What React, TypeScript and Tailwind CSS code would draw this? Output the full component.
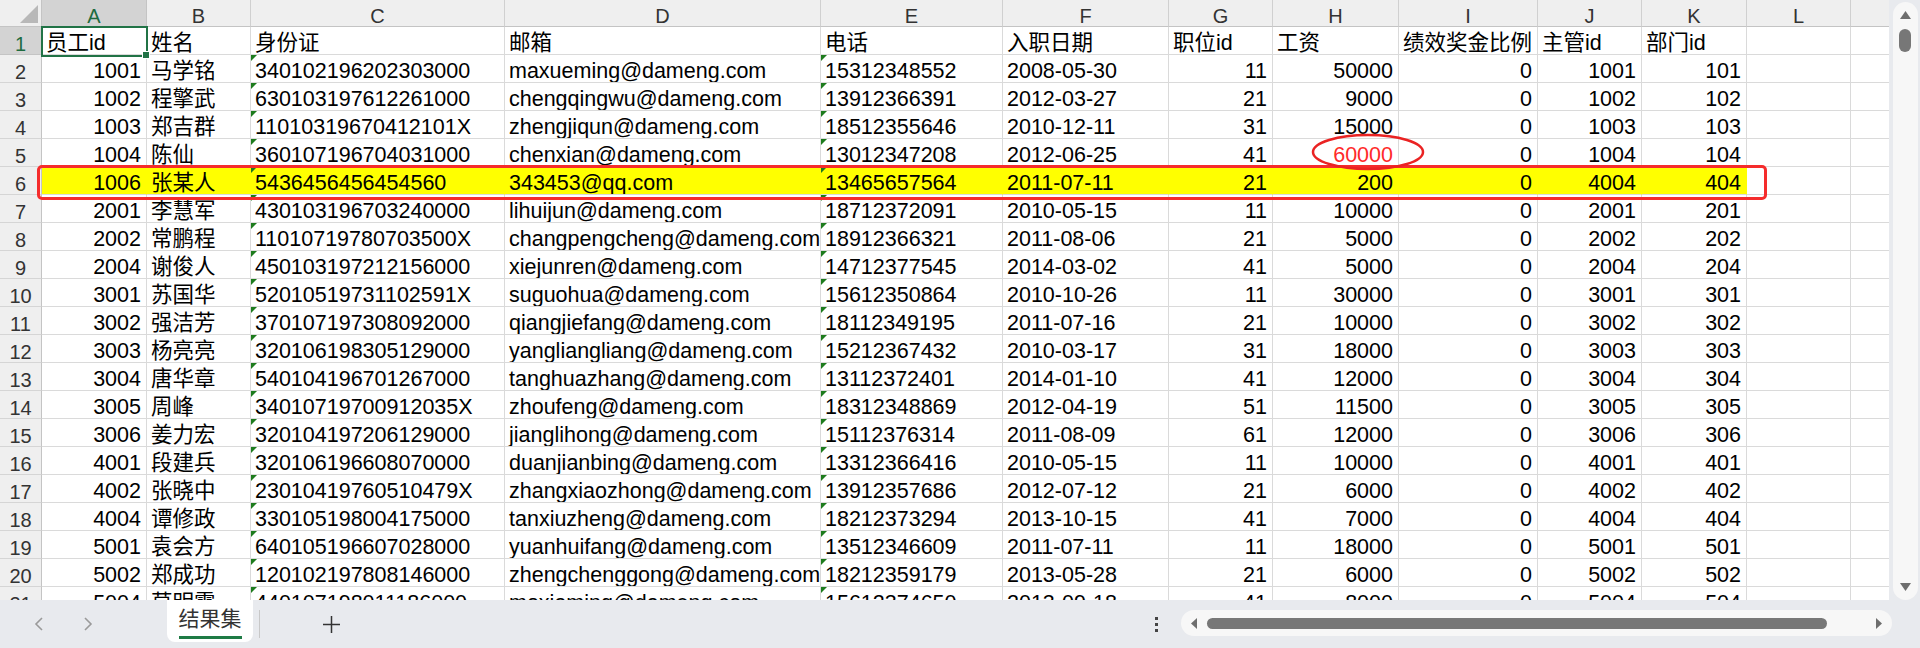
import React from "react";

const colW = [
  "w-[105px]",
  "w-[104px]",
  "w-[254px]",
  "w-[316px]",
  "w-[182px]",
  "w-[166px]",
  "w-[104px]",
  "w-[126px]",
  "w-[139px]",
  "w-[104px]",
  "w-[105px]",
  "w-[104px]",
  "w-[104px]",
];
const letters = ["A", "B", "C", "D", "E", "F", "G", "H", "I", "J", "K", "L", "M"];
const rightAlign = [true, false, false, false, false, false, true, true, true, true, true, false, false];

const header = ["员工id", "姓名", "身份证", "邮箱", "电话", "入职日期", "职位id", "工资", "绩效奖金比例", "主管id", "部门id", "", ""];

const data: string[][] = [
  ["1001", "马学铭", "340102196202303000", "maxueming@dameng.com", "15312348552", "2008-05-30", "11", "50000", "0", "1001", "101"],
  ["1002", "程擎武", "630103197612261000", "chengqingwu@dameng.com", "13912366391", "2012-03-27", "21", "9000", "0", "1002", "102"],
  ["1003", "郑吉群", "11010319670412101X", "zhengjiqun@dameng.com", "18512355646", "2010-12-11", "31", "15000", "0", "1003", "103"],
  ["1004", "陈仙", "360107196704031000", "chenxian@dameng.com", "13012347208", "2012-06-25", "41", "60000", "0", "1004", "104"],
  ["1006", "张某人", "5436456456454560", "343453@qq.com", "13465657564", "2011-07-11", "21", "200", "0", "4004", "404"],
  ["2001", "李慧军", "430103196703240000", "lihuijun@dameng.com", "18712372091", "2010-05-15", "11", "10000", "0", "2001", "201"],
  ["2002", "常鹏程", "11010719780703500X", "changpengcheng@dameng.com", "18912366321", "2011-08-06", "21", "5000", "0", "2002", "202"],
  ["2004", "谢俊人", "450103197212156000", "xiejunren@dameng.com", "14712377545", "2014-03-02", "41", "5000", "0", "2004", "204"],
  ["3001", "苏国华", "52010519731102591X", "suguohua@dameng.com", "15612350864", "2010-10-26", "11", "30000", "0", "3001", "301"],
  ["3002", "强洁芳", "370107197308092000", "qiangjiefang@dameng.com", "18112349195", "2011-07-16", "21", "10000", "0", "3002", "302"],
  ["3003", "杨亮亮", "320106198305129000", "yangliangliang@dameng.com", "15212367432", "2010-03-17", "31", "18000", "0", "3003", "303"],
  ["3004", "唐华章", "540104196701267000", "tanghuazhang@dameng.com", "13112372401", "2014-01-10", "41", "12000", "0", "3004", "304"],
  ["3005", "周峰", "34010719700912035X", "zhoufeng@dameng.com", "18312348869", "2012-04-19", "51", "11500", "0", "3005", "305"],
  ["3006", "姜力宏", "320104197206129000", "jianglihong@dameng.com", "15112376314", "2011-08-09", "61", "12000", "0", "3006", "306"],
  ["4001", "段建兵", "320106196608070000", "duanjianbing@dameng.com", "13312366416", "2010-05-15", "11", "10000", "0", "4001", "401"],
  ["4002", "张晓中", "23010419760510479X", "zhangxiaozhong@dameng.com", "13912357686", "2012-07-12", "21", "6000", "0", "4002", "402"],
  ["4004", "谭修政", "330105198004175000", "tanxiuzheng@dameng.com", "18212373294", "2013-10-15", "41", "7000", "0", "4004", "404"],
  ["5001", "袁会方", "640105196607028000", "yuanhuifang@dameng.com", "13512346609", "2011-07-11", "11", "18000", "0", "5001", "501"],
  ["5002", "郑成功", "120102197808146000", "zhengchenggong@dameng.com", "18212359179", "2013-05-28", "21", "6000", "0", "5002", "502"],
  ["5004", "莫明霞", "440107198011186000", "moxiaming@dameng.com", "15612374650", "2013-09-18", "41", "8000", "0", "5004", "504"],
];

function Cell({
  ci,
  text,
  yellow,
  red,
  tri,
  right,
}: {
  ci: number;
  text: string;
  yellow?: boolean;
  red?: boolean;
  tri?: boolean;
  right: boolean;
}) {
  return (
    <div
      className={`relative h-full shrink-0 ${colW[ci]} border-b border-r ${
        yellow ? "bg-[#ffff00] border-r-[#ffff00] border-b-[#dadada]" : "border-[#dadada]"
      } flex items-end overflow-hidden whitespace-nowrap ${right ? "justify-end pr-[5px]" : "pl-[4px]"}`}
    >
      {tri && (
        <div className="absolute top-0 left-0 w-0 h-0 border-t-[6px] border-t-[#1d7b1d] border-r-[6px] border-r-transparent" />
      )}
      <span className={`leading-none text-[21.5px] ${red ? "text-[#ff2a2a]" : "text-black"}`}>{text}</span>
    </div>
  );
}

export default function App() {
  return (
    <div className="w-[1920px] h-[648px] flex flex-col bg-[#e8eaee] overflow-hidden font-[family-name:'Liberation_Sans','Noto_Sans_CJK_SC',sans-serif]">
      <div className="flex h-[600px] shrink-0">
        <div className="relative w-[1889px] h-[600px] overflow-hidden bg-white">
          {/* column header */}
          <div className="flex h-[27px]">
            <div className="relative w-[42px] shrink-0 h-full bg-[#efefef] border-r border-b border-[#c4c4c4]">
              <svg className="absolute left-0 top-0" width="42" height="27">
                <polygon points="38,5 38,23 20,23" fill="#b8b8b8" />
              </svg>
            </div>
            {letters.map((l, i) => (
              <div
                key={l}
                className={`shrink-0 ${colW[i]} h-full border-r border-b flex items-end justify-center ${
                  i === 0
                    ? "bg-[#d3d3d3] border-r-[#c4c4c4] border-b-[#217346] text-[#1e6b3f]"
                    : "bg-[#efefef] border-r-[#d0d0d0] border-b-[#c4c4c4] text-[#333333]"
                }`}
              >
                <span className="leading-none text-[20px]">{l}</span>
              </div>
            ))}
          </div>
          {/* row 1 */}
          <div className="flex h-[28px]">
            <div className="w-[42px] shrink-0 h-full bg-[#d3d3d3] border-r border-r-[#217346] border-b border-b-[#c4c4c4] flex items-end justify-center text-[#1e6b3f]">
              <span className="leading-none text-[20px]">1</span>
            </div>
            {header.map((h, i) => (
              <Cell key={i} ci={i} text={h} right={false} />
            ))}
          </div>
          {data.map((row, ri) => {
            const yellow = ri === 4;
            return (
              <div key={ri} className="flex h-[28px]">
                <div className="w-[42px] shrink-0 h-full bg-[#efefef] border-r border-r-[#c4c4c4] border-b border-b-[#d5d5d5] flex items-end justify-center text-[#333333]">
                  <span className="leading-none text-[20px]">{ri + 2}</span>
                </div>
                {letters.map((_, ci) => (
                  <Cell
                    key={ci}
                    ci={ci}
                    text={row[ci] ?? ""}
                    right={rightAlign[ci]}
                    yellow={yellow && ci < 11}
                    red={ri === 3 && ci === 7}
                    tri={ci === 2 || ci === 4}
                  />
                ))}
              </div>
            );
          })}

          {/* selection */}
          <div className="absolute left-[41px] top-[26px] w-[107px] h-[31px] border-2 border-[#217346]" />
          <div className="absolute left-[142px] top-[51px] w-[8px] h-[8px] bg-[#217346] border border-white" />

          {/* annotations */}
          <div className="absolute left-[37px] top-[165px] w-[1730px] h-[35px] border-[3px] border-[#f52c2c] rounded-[5px]" />
          <svg className="absolute left-[1311px] top-[133px]" width="114" height="38">
            <ellipse cx="57" cy="19" rx="55" ry="17" fill="none" stroke="#ea2323" strokeWidth="2.5" />
          </svg>
        </div>
        {/* vertical scrollbar */}
        <div className="w-[31px] h-[600px] flex justify-center pt-[2px] pl-[1px]">
          <div className="w-[25px] h-[598px] rounded-full bg-[#f7f7f7] flex flex-col items-center pt-[9px]">
            <svg width="11" height="8">
              <polygon points="5.5,0 11,8 0,8" fill="#6e6e6e" />
            </svg>
            <div className="mt-[10px] w-[12px] h-[23px] rounded-full bg-[#777777]" />
            <div className="flex-1" />
            <svg className="mb-[9px]" width="11" height="8">
              <polygon points="0,0 11,0 5.5,8" fill="#6e6e6e" />
            </svg>
          </div>
        </div>
      </div>

      {/* bottom tab bar */}
      <div className="flex h-[48px] items-start">
        <div className="flex items-center h-[48px] pl-[34px]">
          <svg width="10" height="14" viewBox="0 0 10 14">
            <polyline points="8,1 2,7 8,13" fill="none" stroke="#9a9a9a" strokeWidth="1.6" />
          </svg>
          <svg className="ml-[39px]" width="10" height="14" viewBox="0 0 10 14">
            <polyline points="2,1 8,7 2,13" fill="none" stroke="#9a9a9a" strokeWidth="1.6" />
          </svg>
        </div>
        <div className="ml-[74px] w-[86px] h-[42px] bg-white rounded-b-[8px] flex flex-col items-center pt-[7px]">
          <span className="text-[21px] leading-[24px] text-[#333333]">结果集</span>
          <div className="mt-[5px] w-[63px] h-[3px] bg-[#1e7b45]" />
        </div>
        <div className="ml-[6px] mt-[10px] w-px h-[28px] bg-[#c8c8c8]" />
        <div className="flex items-center h-[48px] ml-[63px]">
          <svg width="17" height="17" viewBox="0 0 17 17">
            <line x1="8.5" y1="0" x2="8.5" y2="17" stroke="#333333" strokeWidth="1.5" />
            <line x1="0" y1="8.5" x2="17" y2="8.5" stroke="#333333" strokeWidth="1.5" />
          </svg>
        </div>
        <div className="flex-1" />
        <div className="flex flex-col items-center justify-center gap-[3px] h-[48px] mr-[23px]">
          <div className="w-[3px] h-[3px] bg-[#444444]" />
          <div className="w-[3px] h-[3px] bg-[#444444]" />
          <div className="w-[3px] h-[3px] bg-[#444444]" />
        </div>
        <div className="mt-[10px] mr-[28px] w-[711px] h-[26px] rounded-full bg-[#f7f7f7] flex items-center pl-[10px] pr-[10px]">
          <svg width="6" height="11">
            <polygon points="6,0 6,11 0,5.5" fill="#6e6e6e" />
          </svg>
          <div className="ml-[10px] w-[620px] h-[11px] rounded-full bg-[#777777]" />
          <div className="flex-1" />
          <svg width="6" height="11">
            <polygon points="0,0 6,5.5 0,11" fill="#6e6e6e" />
          </svg>
        </div>
      </div>
    </div>
  );
}
